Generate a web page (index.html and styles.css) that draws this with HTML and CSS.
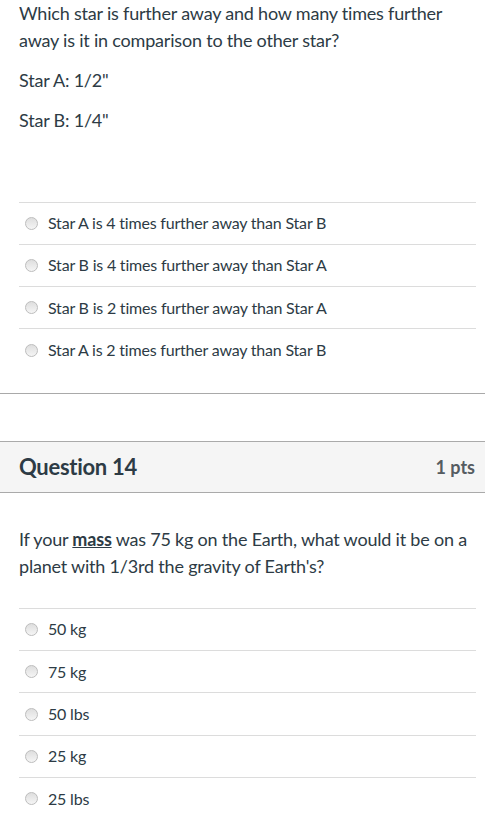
FILE: index.html
```html
<!DOCTYPE html>
<html>
<head>
<meta charset="utf-8">
<link rel="stylesheet" href="styles.css">
</head>
<body>
<div class="question">
  <div class="q-body">
    <p class="q-text">Which star is further away and how many times further away is it in comparison to the other star?</p>
    <p class="q-text">Star A: 1/2"</p>
    <p class="q-text">Star B: 1/4"</p>
  </div>
  <ul class="answers first-answers">
    <li class="answer"><span class="radio"></span><span>Star A is 4 times further away than Star B</span></li>
    <li class="answer"><span class="radio"></span><span>Star B is 4 times further away than Star A</span></li>
    <li class="answer"><span class="radio"></span><span>Star B is 2 times further away than Star A</span></li>
    <li class="answer"><span class="radio"></span><span>Star A is 2 times further away than Star B</span></li>
  </ul>
</div>
<hr class="divider">
<div class="question second">
  <div class="q-header">
    <h2 class="q-name">Question 14</h2>
    <span class="q-points">1 pts</span>
  </div>
  <div class="q-body second-body">
    <p class="q-text">If your <strong class="em">mass</strong> was 75 kg on the Earth, what would it be on a planet with 1/3rd the gravity of Earth's?</p>
  </div>
  <ul class="answers second-answers">
    <li class="answer"><span class="radio"></span><span>50 kg</span></li>
    <li class="answer"><span class="radio"></span><span>75 kg</span></li>
    <li class="answer"><span class="radio"></span><span>50 lbs</span></li>
    <li class="answer"><span class="radio"></span><span>25 kg</span></li>
    <li class="answer"><span class="radio"></span><span>25 lbs</span></li>
  </ul>
</div>
</body>
</html>
```

FILE: styles.css
```css
html, body {
  margin: 0;
  padding: 0;
  background: #fff;
}
body {
  font-family: Lato, "Open Sans", sans-serif;
  font-size: 18px;
  color: #2d3b45;
  width: 485px;
  overflow: hidden;
}
.q-body {
  padding: 0 9px 0 19px;
}
.q-text {
  margin: 0 0 13px 0;
  line-height: 27px;
  font-size: 18px;
  letter-spacing: -0.2px;
}
.answers {
  list-style: none;
  margin: 0 9px 0 19px;
  padding: 0;
}
.first-answers {
  margin-top: 67.5px;
}
.answer {
  display: flex;
  align-items: center;
  border-top: 1px solid #dcdcdc;
  padding: 8.66px 0;
  line-height: 24px;
  font-size: 16px;
  letter-spacing: -0.2px;
}
.radio {
  width: 11px;
  height: 11px;
  border: 1px solid #bdbdbd;
  border-radius: 50%;
  background: linear-gradient(#dedede, #f5f5f5);
  margin: 0 10px 0 6px;
  flex: none;
}
.divider {
  margin: 22px 0 0 0;
  border: 0;
  border-top: 1px solid #a9a9a9;
  height: 0;
}
.second {
  margin-top: 47px;
}
.q-header {
  display: flex;
  align-items: center;
  justify-content: space-between;
  background: #f5f5f5;
  border-top: 1px solid #aaaaaa;
  border-bottom: 1px solid #aaaaaa;
  height: 50px;
  padding: 0 10px 0 19px;
}
.q-name {
  margin: 0;
  font-size: 22px;
  font-weight: bold;
  letter-spacing: -0.3px;
  color: #2d3b45;
}
.q-points {
  font-weight: bold;
  font-size: 18px;
  color: #555c61;
}
.second-body {
  padding-top: 33.5px;
}
.second-body .q-text {
  margin-bottom: 0;
}
.em {
  font-weight: bold;
  text-decoration: underline;
}
.second-answers {
  margin-top: 27.5px;
}
```
